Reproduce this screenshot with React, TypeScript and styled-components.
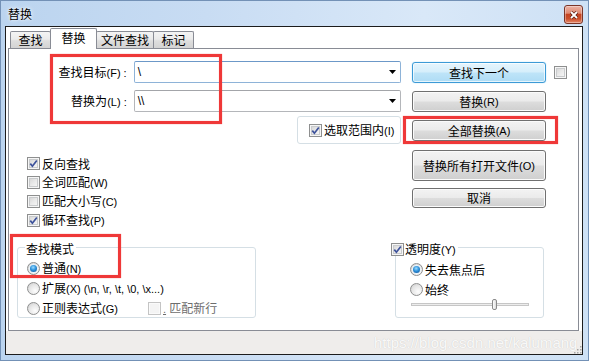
import React from "react";
import styled, { createGlobalStyle } from "styled-components";

const GlobalStyle = createGlobalStyle`
  html, body { margin: 0; padding: 0; background: #fff; }
  body {
    font-family: "Noto Sans CJK SC", "Liberation Sans", sans-serif;
    font-size: 12px;
    color: #000;
  }
  *, *::before, *::after { box-sizing: border-box; }
`;

const Window = styled.div`
  position: relative;
  width: 589px;
  height: 361px;
  display: flex;
  flex-direction: column;
  padding: 0 5px 5px 4px;
  border: 1px solid #7391b6;
  background: linear-gradient(90deg, #bbd4ef 0%, #c8dcf3 35%, #d9e8f8 72%, #cee1f5 100%);
  overflow: hidden;
`;

const TitleBar = styled.div`
  height: 25px;
  flex: none;
  display: flex;
  align-items: flex-start;
  justify-content: space-between;
  padding-left: 3px;
`;

const Title = styled.span`
  margin-top: 6px;
  line-height: 14px;
  text-shadow: 0 0 5px #fff, 0 0 2px #fff;
`;

const CloseButton = styled.div`
  margin-top: 4px;
  width: 19px;
  height: 19px;
  border: 1px solid #7a3528;
  border-radius: 3px;
  background: linear-gradient(#ebb3a5 0%, #e08a72 42%, #c5431f 50%, #cb4f2b 75%, #e58a6c 100%);
  box-shadow: inset 0 0 0 1px rgba(255, 255, 255, 0.35);
  display: flex;
  align-items: center;
  justify-content: center;
`;

const Client = styled.div`
  flex: 1;
  display: flex;
  flex-direction: column;
  border: 1px solid #1c1c1c;
  background: #fff;
`;

const TabArea = styled.div`
  flex: 1;
  display: flex;
  flex-direction: column;
  padding: 1px 3px 0 2px;
`;

const TabRow = styled.div`
  height: 20px;
  flex: none;
  display: flex;
  align-items: flex-end;
  padding-left: 2px;
  position: relative;
  z-index: 1;
`;

const Tab = styled.div<{ $active?: boolean; $w: number }>`
  position: relative;
  z-index: ${(p) => (p.$active ? 2 : 1)};
  width: ${(p) => p.$w}px;
  height: ${(p) => (p.$active ? 21 : 17)}px;
  margin-bottom: ${(p) => (p.$active ? -1 : 0)}px;
  border: 1px solid #898c95;
  border-bottom: none;
  border-radius: 2px 2px 0 0;
  background: ${(p) =>
    p.$active ? "#fff" : "linear-gradient(#f4f4f4 0%, #ebebeb 45%, #dedede 55%, #d3d3d3 100%)"};
  text-align: center;
  line-height: ${(p) => (p.$active ? 14 : 16)}px;
  padding-top: ${(p) => (p.$active ? 2 : 0)}px;
  white-space: nowrap;
  & + & { margin-left: -1px; }
`;

const Panel = styled.div`
  flex: 1;
  border: 1px solid #898c95;
  background: #fff;
  display: flex;
  flex-direction: column;
`;

const StatusStrip = styled.div`
  height: 23px;
  flex: none;
  background: #efedeb;
`;

const Top = styled.div`
  display: flex;
  align-items: flex-start;
`;

const LeftCol = styled.div`
  width: 392px;
  display: flex;
  flex-direction: column;
`;

const FieldRow = styled.div<{ $mt: number }>`
  height: 22px;
  margin-top: ${(p) => p.$mt}px;
  display: flex;
  align-items: center;
`;

const FieldLabel = styled.span`
  width: 118px;
  margin-right: 7px;
  text-align: right;
  white-space: nowrap;
  line-height: 14px;
`;

const Combo = styled.div<{ $focused?: boolean }>`
  width: 268px;
  height: 22px;
  border: 1px solid ${(p) => (p.$focused ? "#8eb3d8" : "#b4b6ba")};
  border-top-color: ${(p) => (p.$focused ? "#6c98c8" : "#a3a5a9")};
  border-radius: 2px;
  display: flex;
  align-items: center;
  justify-content: space-between;
  padding: 0 4px 0 3px;
  font-family: "Liberation Sans", sans-serif;
  font-size: 12px;
`;

const ScopeBox = styled.div`
  margin-top: 4px;
  margin-left: auto;
  width: 104px;
  height: 28px;
  border: 1px solid #d5dfe5;
  border-radius: 3px;
  display: flex;
  align-items: center;
  padding-left: 11px;
`;

const CheckList = styled.div`
  margin-top: 13px;
  padding-left: 18px;
  display: flex;
  flex-direction: column;
  gap: 6px;
`;

const Item = styled.label<{ $w?: number; $muted?: boolean }>`
  display: flex;
  align-items: center;
  gap: 2px;
  height: 13px;
  line-height: 13px;
  white-space: nowrap;
  width: ${(p) => (p.$w ? `${p.$w}px` : "auto")};
  flex: none;
  color: ${(p) => (p.$muted ? "#6d6d6d" : "#000")};
`;

const Acc = styled.span`
  font-family: "Liberation Sans", sans-serif;
  font-size: 11px;
`;

const BoxFace = styled.span<{ $disabled?: boolean }>`
  width: 13px;
  height: 13px;
  flex: none;
  border: 1px solid ${(p) => (p.$disabled ? "#c4c4c4" : "#8e8f8f")};
  background: ${(p) =>
    p.$disabled ? "#f4f4f4" : "linear-gradient(135deg, #cfcfcf 0%, #e9e9e9 50%, #fbfbfb 100%)"};
  box-shadow: ${(p) =>
    p.$disabled ? "inset 0 0 0 1px #fafafa" : "inset 0 0 0 1px #f6f6f6, inset 0 0 0 2px #c9cbcd"};
  display: inline-flex;
  align-items: center;
  justify-content: center;
`;

const RadioFace = styled.span<{ $on?: boolean }>`
  width: 13px;
  height: 13px;
  flex: none;
  border-radius: 50%;
  border: 1px solid #8e8f8f;
  background: radial-gradient(circle at 65% 70%, #fdfdfd 0%, #e6e6e6 55%, #c9c9c9 100%);
  display: inline-flex;
  align-items: center;
  justify-content: center;
  &::after {
    content: "";
    display: ${(p) => (p.$on ? "block" : "none")};
    width: 7px;
    height: 7px;
    border-radius: 50%;
    background: radial-gradient(circle at 45% 35%, #9ddcff 0%, #2e93dc 45%, #0c4a90 100%);
    box-shadow: 0 0 0 1px #e9f3fa;
  }
`;

const RightCol = styled.div`
  margin-left: 11px;
  margin-top: 13px;
  display: flex;
  flex-direction: column;
`;

const BtnRow = styled.div`
  display: flex;
  align-items: center;
  gap: 8px;
`;

const Button = styled.div<{ $h: number; $mt?: number; $default?: boolean }>`
  width: 134px;
  height: ${(p) => p.$h}px;
  margin-top: ${(p) => p.$mt ?? 0}px;
  border: 1px solid ${(p) => (p.$default ? "#3c9ad6" : "#707070")};
  border-radius: 3px;
  background: ${(p) =>
    p.$default
      ? "linear-gradient(#e6f5fd 0%, #d5eefb 48%, #bee4f8 52%, #aedcf5 100%)"
      : "linear-gradient(#f3f3f3 0%, #ebebeb 48%, #dddddd 52%, #cfcfcf 100%)"};
  box-shadow: ${(p) =>
    p.$default
      ? "inset 0 0 0 1px rgba(255,255,255,0.7), 0 0 1px 0 #6cc4f6"
      : "inset 0 0 0 1px #fbfbfb"};
  display: flex;
  align-items: center;
  justify-content: center;
  white-space: nowrap;
  line-height: 14px;
`;

const Bottom = styled.div`
  margin-top: 15px;
  display: flex;
  align-items: flex-start;
`;

const Group = styled.div<{ $ml: number; $w: number }>`
  margin-left: ${(p) => p.$ml}px;
  width: ${(p) => p.$w}px;
  display: flex;
  flex-direction: column;
`;

const Legend = styled.div<{ $ml?: number; $mt?: number }>`
  align-self: flex-start;
  position: relative;
  z-index: 1;
  margin-left: ${(p) => p.$ml ?? 0}px;
  margin-top: ${(p) => p.$mt ?? 0}px;
  padding: 0 2px 0 1px;
  background: #fff;
  height: 13px;
  line-height: 13px;
  display: flex;
  align-items: center;
  gap: 1px;
  white-space: nowrap;
`;

const Frame = styled.div<{ $ml?: number; $mt: number; $pt: number; $pl: number }>`
  margin-left: ${(p) => p.$ml ?? 0}px;
  margin-top: ${(p) => p.$mt}px;
  height: 71px;
  border: 1px solid #d5dfe5;
  border-radius: 3px;
  padding: ${(p) => p.$pt}px 0 0 ${(p) => p.$pl}px;
  display: flex;
  flex-direction: column;
  gap: 7px;
`;

const ModeRow = styled.div`
  display: flex;
  align-items: center;
  height: 13px;
`;

const Slider = styled.div`
  position: relative;
  width: 118px;
  height: 11px;
  margin-left: 1px;
  margin-top: -4px;
  &::before {
    content: "";
    position: absolute;
    left: 0;
    right: 0;
    top: 4px;
    height: 3px;
    border: 1px solid #c6c6c6;
    background: #ececec;
  }
`;

const Thumb = styled.span`
  position: absolute;
  top: 0;
  width: 5px;
  height: 11px;
  border: 1px solid #8a8a8a;
  border-radius: 2px;
  background: linear-gradient(90deg, #ffffff, #dcdcdc);
`;

const Annotation = styled.div<{ $x: number; $y: number; $w: number; $h: number }>`
  position: absolute;
  left: ${(p) => p.$x - 1}px;
  top: ${(p) => p.$y - 1}px;
  width: ${(p) => p.$w}px;
  height: ${(p) => p.$h}px;
  border: 3px solid #ef3838;
  box-shadow: 0 0 1px rgba(239, 56, 56, 0.6), inset 0 0 1px rgba(239, 56, 56, 0.6);
  pointer-events: none;
`;

const Watermark = styled.div`
  position: absolute;
  left: 373px;
  top: 333px;
  font-family: "Liberation Sans", sans-serif;
  font-size: 15px;
  line-height: 18px;
  color: rgba(255, 255, 255, 0.9);
  text-shadow: 0 0 1px rgba(0, 0, 0, 0.18);
  white-space: nowrap;
  pointer-events: none;
`;

const Grip = styled.svg`
  position: absolute;
  left: 572px;
  top: 344px;
`;

const CheckBox = ({ checked, disabled }: { checked?: boolean; disabled?: boolean }) => (
  <BoxFace $disabled={disabled}>
    {checked && (
      <svg width="9" height="9" viewBox="0 0 9 9">
        <path d="M1.3 4.6 L3.4 7.2 L7.8 1.4" fill="none" stroke="#3d529b" strokeWidth="1.7" />
      </svg>
    )}
  </BoxFace>
);

const Arrow = () => (
  <svg width="7" height="4" viewBox="0 0 7 4">
    <path d="M0 0 H7 L3.5 4 Z" fill="#000" />
  </svg>
);

const opacity = 0.72;

export default function App() {
  return (
    <Window>
      <GlobalStyle />
      <TitleBar>
        <Title>替换</Title>
        <CloseButton>
          <svg width="10" height="8" viewBox="0 0 10 8">
            <path d="M2 1 L8 7 M8 1 L2 7" stroke="#5a1e12" strokeWidth="3.2" />
            <path d="M2 1 L8 7 M8 1 L2 7" stroke="#fff" strokeWidth="1.8" />
          </svg>
        </CloseButton>
      </TitleBar>
      <Client>
        <TabArea>
          <TabRow>
            <Tab $w={41}>查找</Tab>
            <Tab $w={47} $active>替换</Tab>
            <Tab $w={58}>文件查找</Tab>
            <Tab $w={41}>标记</Tab>
          </TabRow>
          <Panel>
            <Top>
              <LeftCol>
                <FieldRow $mt={12}>
                  <FieldLabel>
                    查找目标<Acc>(F) :</Acc>
                  </FieldLabel>
                  <Combo $focused>
                    <span>\</span>
                    <Arrow />
                  </Combo>
                </FieldRow>
                <FieldRow $mt={7}>
                  <FieldLabel>
                    替换为<Acc>(L) :</Acc>
                  </FieldLabel>
                  <Combo>
                    <span>\\</span>
                    <Arrow />
                  </Combo>
                </FieldRow>
                <ScopeBox>
                  <Item>
                    <CheckBox checked />
                    <span>
                      选取范围内<Acc>(I)</Acc>
                    </span>
                  </Item>
                </ScopeBox>
                <CheckList>
                  <Item>
                    <CheckBox checked />
                    <span>反向查找</span>
                  </Item>
                  <Item>
                    <CheckBox />
                    <span>
                      全词匹配<Acc>(W)</Acc>
                    </span>
                  </Item>
                  <Item>
                    <CheckBox />
                    <span>
                      匹配大小写<Acc>(C)</Acc>
                    </span>
                  </Item>
                  <Item>
                    <CheckBox checked />
                    <span>
                      循环查找<Acc>(P)</Acc>
                    </span>
                  </Item>
                </CheckList>
              </LeftCol>
              <RightCol>
                <BtnRow>
                  <Button $h={21} $default>
                    查找下一个
                  </Button>
                  <CheckBox />
                </BtnRow>
                <Button $h={21} $mt={8}>
                  替换<Acc>(R)</Acc>
                </Button>
                <Button $h={21} $mt={8}>
                  全部替换<Acc>(A)</Acc>
                </Button>
                <Button $h={31} $mt={9}>
                  替换所有打开文件<Acc>(O)</Acc>
                </Button>
                <Button $h={20} $mt={7}>
                  取消
                </Button>
              </RightCol>
            </Top>
            <Bottom>
              <Group $ml={8} $w={239}>
                <Legend $ml={8}>查找模式</Legend>
                <Frame $mt={-8} $pt={14} $pl={9}>
                  <ModeRow>
                    <Item>
                      <RadioFace $on />
                      <span>
                        普通<Acc>(N)</Acc>
                      </span>
                    </Item>
                  </ModeRow>
                  <ModeRow>
                    <Item>
                      <RadioFace />
                      <span>
                        扩展<Acc>(X) (\n, \r, \t, \0, \x...)</Acc>
                      </span>
                    </Item>
                  </ModeRow>
                  <ModeRow>
                    <Item $w={121}>
                      <RadioFace />
                      <span>
                        正则表达式<Acc>(G)</Acc>
                      </span>
                    </Item>
                    <Item $muted>
                      <CheckBox disabled />
                      <span>
                        <Acc>
                          <u>.</u>{" "}
                        </Acc>
                        匹配新行
                      </span>
                    </Item>
                  </ModeRow>
                </Frame>
              </Group>
              <Group $ml={134} $w={154}>
                <Legend $mt={1}>
                  <CheckBox checked />
                  <span>
                    透明度<Acc>(Y)</Acc>
                  </span>
                </Legend>
                <Frame $ml={5} $mt={-9} $pt={15} $pl={14}>
                  <Item>
                    <RadioFace $on />
                    <span>失去焦点后</span>
                  </Item>
                  <Item>
                    <RadioFace />
                    <span>始终</span>
                  </Item>
                  <Slider>
                    <Thumb style={{ left: Math.round((118 - 5) * opacity) }} />
                  </Slider>
                </Frame>
              </Group>
            </Bottom>
          </Panel>
        </TabArea>
        <StatusStrip />
      </Client>

      <Annotation $x={50} $y={54} $w={172} $h={70} />
      <Annotation $x={403} $y={116} $w={155} $h={28} />
      <Annotation $x={10} $y={234} $w={111} $h={44} />
      <Watermark>https://blog.csdn.net/kalumang</Watermark>
      <Grip width="9" height="9" viewBox="0 0 9 9">
        <g fill="#a8a8a8">
          <rect x="7" y="1" width="1.5" height="1.5" />
          <rect x="4" y="4" width="1.5" height="1.5" />
          <rect x="7" y="4" width="1.5" height="1.5" />
          <rect x="1" y="7" width="1.5" height="1.5" />
          <rect x="4" y="7" width="1.5" height="1.5" />
          <rect x="7" y="7" width="1.5" height="1.5" />
        </g>
      </Grip>
    </Window>
  );
}
